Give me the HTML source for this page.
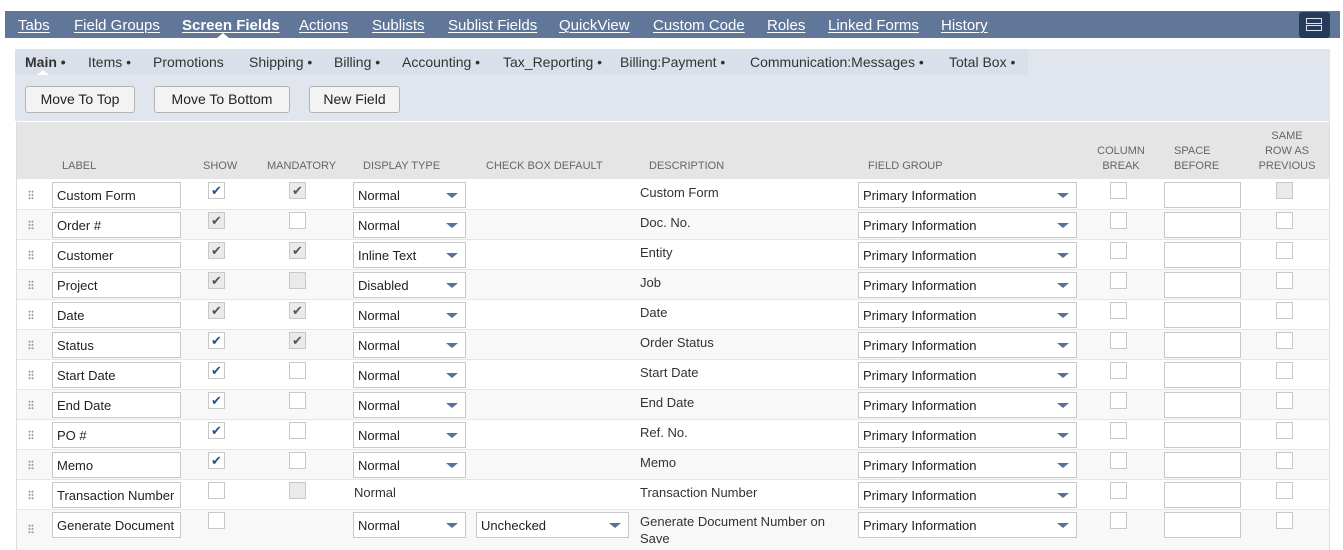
<!DOCTYPE html><html><head><style>
*{box-sizing:border-box;margin:0;padding:0}
body{width:1343px;height:550px;overflow:hidden;background:#fff;font-family:"Liberation Sans",sans-serif;font-size:13px;color:#333;position:relative}
.a{position:absolute;white-space:nowrap}
.nav{left:5px;top:11px;width:1335px;height:27px;background:#607799}
.nav span{position:absolute;top:6px;color:#fff;font-size:15px;text-decoration:underline;text-decoration-thickness:1px;text-underline-offset:2px}
.sub span{position:absolute;top:54px;font-size:14px;color:#333}
.btn{position:absolute;top:86px;height:27px;background:#f3f3f3;border:1px solid #b3b3b3;border-radius:3px;font-size:14px;color:#222;text-align:center;line-height:25px}
.h{position:absolute;font-size:11px;color:#666;text-align:center;line-height:15px}
.row{position:absolute;left:17px;width:1312px;height:30px;border-bottom:1px solid #e6e6e6}
.inp{position:absolute;height:26px;border:1px solid #c8c8c8;background:#fff;line-height:24px;padding:1px 0 0 4px;font-size:13px;color:#222;overflow:hidden}
.sel:after{content:"";position:absolute;right:7px;top:10px;border-left:6px solid transparent;border-right:6px solid transparent;border-top:5px solid #5a7099}
.cb{position:absolute;width:17px;height:17px;border:1px solid #c8c8c8;background:#fff;font-size:13px;line-height:15px;text-align:center}
.g{background:#eaeaea}
.bl{color:#24518f}.gr{color:#555}
.dr{position:absolute;left:11px;top:10px;width:6px;height:10px;background:radial-gradient(circle,#999 0.8px,transparent 1.2px) 0 0/3px 3.3px}
.t{position:absolute;top:5px;font-size:13px;color:#333}
</style></head><body>
<div class="a nav">
<span style="left:13px">Tabs</span><span style="left:69px">Field Groups</span><span style="left:177px;font-weight:bold">Screen Fields</span><span style="left:294px">Actions</span><span style="left:367px">Sublists</span><span style="left:443px">Sublist Fields</span><span style="left:554px">QuickView</span><span style="left:648px">Custom Code</span><span style="left:762px">Roles</span><span style="left:823px">Linked Forms</span><span style="left:936px">History</span>
<div style="position:absolute;left:1294px;top:1px;width:31px;height:26px;background:#263a5a;border-radius:3px"><div style="position:absolute;left:7px;top:6px;width:16px;height:6px;border:1px solid #dfe6f0"></div><div style="position:absolute;left:7px;top:13px;width:16px;height:6px;border:1px solid #dfe6f0"></div></div>
</div>
<div class="a" style="left:217px;top:33px;border-left:6px solid transparent;border-right:6px solid transparent;border-bottom:5px solid #fff;width:0"></div>
<div class="a" style="left:15px;top:49px;width:1315px;height:72px;background:#e1e6ee"></div>
<div class="a" style="left:15px;top:49px;width:1013px;height:26px;background:#dae0ea"></div>
<div class="a" style="left:37px;top:70px;border-left:6px solid transparent;border-right:6px solid transparent;border-bottom:5px solid #fff;width:0"></div>
<div class="sub">
<span style="left:25px;font-weight:bold">Main •</span><span style="left:88px">Items •</span><span style="left:153px">Promotions</span><span style="left:249px">Shipping •</span><span style="left:334px">Billing •</span><span style="left:402px">Accounting •</span><span style="left:503px">Tax_Reporting •</span><span style="left:620px">Billing:Payment •</span><span style="left:750px">Communication:Messages •</span><span style="left:949px">Total Box •</span>
</div>
<div class="btn" style="left:25px;width:110px">Move To Top</div>
<div class="btn" style="left:154px;width:136px">Move To Bottom</div>
<div class="btn" style="left:309px;width:91px">New Field</div>
<div class="a" style="left:16px;top:121px;width:1314px;height:429px;border-left:1px solid #ddd;border-right:1px solid #ddd"></div>
<div class="a" style="left:17px;top:122px;width:1312px;height:57px;background:#e5e5e5"></div>
<div class="h" style="left:62px;top:159px">LABEL</div>
<div class="h" style="left:203px;top:159px">SHOW</div>
<div class="h" style="left:267px;top:159px">MANDATORY</div>
<div class="h" style="left:363px;top:159px">DISPLAY TYPE</div>
<div class="h" style="left:486px;top:159px">CHECK BOX DEFAULT</div>
<div class="h" style="left:649px;top:159px">DESCRIPTION</div>
<div class="h" style="left:868px;top:159px">FIELD GROUP</div>
<div class="h" style="left:1092px;top:144px;width:58px">COLUMN<br>BREAK</div>
<div class="h" style="left:1174px;top:144px;text-align:left">SPACE<br>BEFORE</div>
<div class="h" style="left:1255px;top:129px;width:64px">SAME<br>ROW AS<br>PREVIOUS</div>

<div class="row" style="top:180px;background:#fff"><div class="dr"></div><div class="inp" style="left:35px;top:2px;width:129px">Custom Form</div><div class="cb bl" style="left:191px;top:2px">✔</div><div class="cb g gr" style="left:272px;top:2px">✔</div><div class="inp sel" style="left:336px;top:2px;width:113px">Normal</div><div class="t" style="left:623px">Custom Form</div><div class="inp sel" style="left:841px;top:2px;width:219px">Primary Information</div><div class="cb" style="left:1093px;top:2px"></div><div class="inp" style="left:1147px;top:2px;width:77px"></div><div class="cb g" style="left:1259px;top:2px"></div></div>
<div class="row" style="top:210px;background:#f8f8f8"><div class="dr"></div><div class="inp" style="left:35px;top:2px;width:129px">Order #</div><div class="cb g gr" style="left:191px;top:2px">✔</div><div class="cb" style="left:272px;top:2px"></div><div class="inp sel" style="left:336px;top:2px;width:113px">Normal</div><div class="t" style="left:623px">Doc. No.</div><div class="inp sel" style="left:841px;top:2px;width:219px">Primary Information</div><div class="cb" style="left:1093px;top:2px"></div><div class="inp" style="left:1147px;top:2px;width:77px"></div><div class="cb" style="left:1259px;top:2px"></div></div>
<div class="row" style="top:240px;background:#fff"><div class="dr"></div><div class="inp" style="left:35px;top:2px;width:129px">Customer</div><div class="cb g gr" style="left:191px;top:2px">✔</div><div class="cb g gr" style="left:272px;top:2px">✔</div><div class="inp sel" style="left:336px;top:2px;width:113px">Inline Text</div><div class="t" style="left:623px">Entity</div><div class="inp sel" style="left:841px;top:2px;width:219px">Primary Information</div><div class="cb" style="left:1093px;top:2px"></div><div class="inp" style="left:1147px;top:2px;width:77px"></div><div class="cb" style="left:1259px;top:2px"></div></div>
<div class="row" style="top:270px;background:#f8f8f8"><div class="dr"></div><div class="inp" style="left:35px;top:2px;width:129px">Project</div><div class="cb g gr" style="left:191px;top:2px">✔</div><div class="cb g" style="left:272px;top:2px"></div><div class="inp sel" style="left:336px;top:2px;width:113px">Disabled</div><div class="t" style="left:623px">Job</div><div class="inp sel" style="left:841px;top:2px;width:219px">Primary Information</div><div class="cb" style="left:1093px;top:2px"></div><div class="inp" style="left:1147px;top:2px;width:77px"></div><div class="cb" style="left:1259px;top:2px"></div></div>
<div class="row" style="top:300px;background:#fff"><div class="dr"></div><div class="inp" style="left:35px;top:2px;width:129px">Date</div><div class="cb g gr" style="left:191px;top:2px">✔</div><div class="cb g gr" style="left:272px;top:2px">✔</div><div class="inp sel" style="left:336px;top:2px;width:113px">Normal</div><div class="t" style="left:623px">Date</div><div class="inp sel" style="left:841px;top:2px;width:219px">Primary Information</div><div class="cb" style="left:1093px;top:2px"></div><div class="inp" style="left:1147px;top:2px;width:77px"></div><div class="cb" style="left:1259px;top:2px"></div></div>
<div class="row" style="top:330px;background:#f8f8f8"><div class="dr"></div><div class="inp" style="left:35px;top:2px;width:129px">Status</div><div class="cb bl" style="left:191px;top:2px">✔</div><div class="cb g gr" style="left:272px;top:2px">✔</div><div class="inp sel" style="left:336px;top:2px;width:113px">Normal</div><div class="t" style="left:623px">Order Status</div><div class="inp sel" style="left:841px;top:2px;width:219px">Primary Information</div><div class="cb" style="left:1093px;top:2px"></div><div class="inp" style="left:1147px;top:2px;width:77px"></div><div class="cb" style="left:1259px;top:2px"></div></div>
<div class="row" style="top:360px;background:#fff"><div class="dr"></div><div class="inp" style="left:35px;top:2px;width:129px">Start Date</div><div class="cb bl" style="left:191px;top:2px">✔</div><div class="cb" style="left:272px;top:2px"></div><div class="inp sel" style="left:336px;top:2px;width:113px">Normal</div><div class="t" style="left:623px">Start Date</div><div class="inp sel" style="left:841px;top:2px;width:219px">Primary Information</div><div class="cb" style="left:1093px;top:2px"></div><div class="inp" style="left:1147px;top:2px;width:77px"></div><div class="cb" style="left:1259px;top:2px"></div></div>
<div class="row" style="top:390px;background:#f8f8f8"><div class="dr"></div><div class="inp" style="left:35px;top:2px;width:129px">End Date</div><div class="cb bl" style="left:191px;top:2px">✔</div><div class="cb" style="left:272px;top:2px"></div><div class="inp sel" style="left:336px;top:2px;width:113px">Normal</div><div class="t" style="left:623px">End Date</div><div class="inp sel" style="left:841px;top:2px;width:219px">Primary Information</div><div class="cb" style="left:1093px;top:2px"></div><div class="inp" style="left:1147px;top:2px;width:77px"></div><div class="cb" style="left:1259px;top:2px"></div></div>
<div class="row" style="top:420px;background:#fff"><div class="dr"></div><div class="inp" style="left:35px;top:2px;width:129px">PO #</div><div class="cb bl" style="left:191px;top:2px">✔</div><div class="cb" style="left:272px;top:2px"></div><div class="inp sel" style="left:336px;top:2px;width:113px">Normal</div><div class="t" style="left:623px">Ref. No.</div><div class="inp sel" style="left:841px;top:2px;width:219px">Primary Information</div><div class="cb" style="left:1093px;top:2px"></div><div class="inp" style="left:1147px;top:2px;width:77px"></div><div class="cb" style="left:1259px;top:2px"></div></div>
<div class="row" style="top:450px;background:#f8f8f8"><div class="dr"></div><div class="inp" style="left:35px;top:2px;width:129px">Memo</div><div class="cb bl" style="left:191px;top:2px">✔</div><div class="cb" style="left:272px;top:2px"></div><div class="inp sel" style="left:336px;top:2px;width:113px">Normal</div><div class="t" style="left:623px">Memo</div><div class="inp sel" style="left:841px;top:2px;width:219px">Primary Information</div><div class="cb" style="left:1093px;top:2px"></div><div class="inp" style="left:1147px;top:2px;width:77px"></div><div class="cb" style="left:1259px;top:2px"></div></div>
<div class="row" style="top:480px;background:#fff"><div class="dr"></div><div class="inp" style="left:35px;top:2px;width:129px">Transaction Number</div><div class="cb" style="left:191px;top:2px"></div><div class="cb g" style="left:272px;top:2px"></div><div class="t" style="left:337px">Normal</div><div class="t" style="left:623px">Transaction Number</div><div class="inp sel" style="left:841px;top:2px;width:219px">Primary Information</div><div class="cb" style="left:1093px;top:2px"></div><div class="inp" style="left:1147px;top:2px;width:77px"></div><div class="cb" style="left:1259px;top:2px"></div></div>
<div class="row" style="top:510px;height:40px;background:#f8f8f8;border:none"><div class="dr" style="top:14px"></div><div class="inp" style="left:35px;top:2px;width:129px">Generate Document Number</div><div class="cb" style="left:191px;top:2px"></div><div class="inp sel" style="left:336px;top:2px;width:113px">Normal</div><div class="inp sel" style="left:459px;top:2px;width:153px">Unchecked</div><div class="t" style="left:623px;line-height:17px;top:3px">Generate Document Number on<br>Save</div><div class="inp sel" style="left:841px;top:2px;width:219px">Primary Information</div><div class="cb" style="left:1093px;top:2px"></div><div class="inp" style="left:1147px;top:2px;width:77px"></div><div class="cb" style="left:1259px;top:2px"></div></div>
</body></html>
